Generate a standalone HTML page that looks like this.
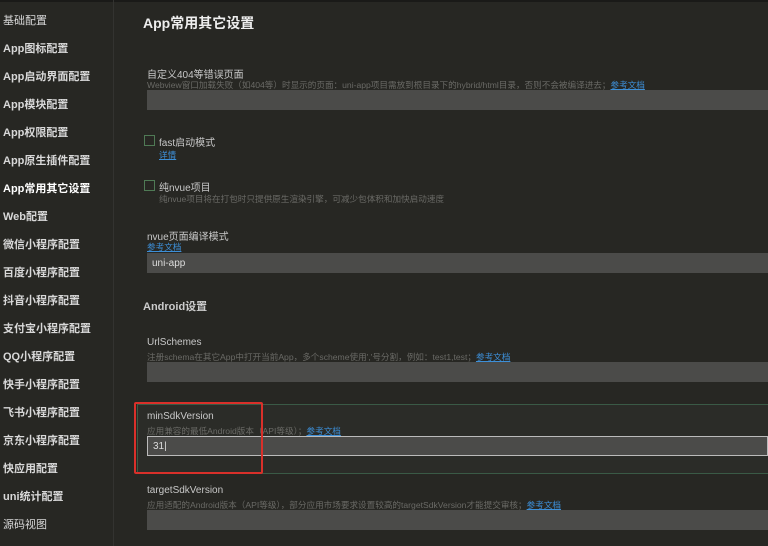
<!DOCTYPE html><html><head><meta charset="utf-8"><style>
body{margin:0;width:768px;height:546px;background:#272723;font-family:"Liberation Sans","Noto Sans CJK SC",sans-serif;overflow:hidden;position:relative;color:#ccc}
.a{position:absolute;white-space:nowrap}
.s{left:3px;font-size:11px;font-weight:bold;color:#d8d8d8}
.l{font-size:10px;color:#c8c8c8}
.d{font-size:8.6px;color:#6a6a66}
.k{color:#3d8fd8;text-decoration:underline}
.in{position:absolute;left:147px;right:0;height:20px;background:#4b4b49}
.cb{position:absolute;left:144px;width:9px;height:9px;border:1px solid #4f7a55}
</style></head><body>
<div class="a" style="left:0;top:0;width:768px;height:2px;background:#1a1a18"></div>
<div class="a" style="left:113px;top:0;width:1px;height:546px;background:#333330"></div>
<div class="a s" style="top:12px;font-weight:normal">基础配置</div>
<div class="a s" style="top:40px">App图标配置</div>
<div class="a s" style="top:68px">App启动界面配置</div>
<div class="a s" style="top:96px">App模块配置</div>
<div class="a s" style="top:124px">App权限配置</div>
<div class="a s" style="top:152px">App原生插件配置</div>
<div class="a s" style="top:180px;color:#fff">App常用其它设置</div>
<div class="a s" style="top:208px">Web配置</div>
<div class="a s" style="top:236px">微信小程序配置</div>
<div class="a s" style="top:264px">百度小程序配置</div>
<div class="a s" style="top:292px">抖音小程序配置</div>
<div class="a s" style="top:320px">支付宝小程序配置</div>
<div class="a s" style="top:348px">QQ小程序配置</div>
<div class="a s" style="top:376px">快手小程序配置</div>
<div class="a s" style="top:404px">飞书小程序配置</div>
<div class="a s" style="top:432px">京东小程序配置</div>
<div class="a s" style="top:460px">快应用配置</div>
<div class="a s" style="top:488px">uni统计配置</div>
<div class="a s" style="top:516px;font-weight:normal">源码视图</div>

<div class="a" style="left:143px;top:13px;font-size:14px;font-weight:bold;color:#eee">App常用其它设置</div>
<div class="a l" style="left:147px;top:66px">自定义404等错误页面</div>
<div class="a d" style="left:147px;top:79px">Webview窗口加载失败（如404等）时显示的页面：uni-app项目需放到根目录下的hybrid/html目录，否则不会被编译进去；<span class="k">参考文档</span></div>
<div class="in" style="top:90px"></div>

<div class="cb" style="top:135px"></div>
<div class="a l" style="left:159px;top:134px">fast启动模式</div>
<div class="a d k" style="left:159px;top:149px">详情</div>
<div class="cb" style="top:180px"></div>
<div class="a l" style="left:159px;top:179px">纯nvue项目</div>
<div class="a d" style="left:159px;top:193px">纯nvue项目将在打包时只提供原生渲染引擎，可减少包体积和加快启动速度</div>

<div class="a l" style="left:147px;top:228px">nvue页面编译模式</div>
<div class="a d k" style="left:147px;top:241px">参考文档</div>
<div class="in" style="top:253px"></div>
<div class="a l" style="left:152px;top:258px;color:#ddd">uni-app</div>

<div class="a" style="left:143px;top:298px;font-size:11px;font-weight:bold;color:#ccc">Android设置</div>
<div class="a l" style="left:147px;top:337px">UrlSchemes</div>
<div class="a d" style="left:147px;top:351px">注册schema在其它App中打开当前App，多个scheme使用','号分割，例如：test1,test；<span class="k">参考文档</span></div>
<div class="in" style="top:362px"></div>

<div class="a" style="left:137px;top:404px;width:640px;height:70px;border:1px solid #3a5a46;background:#2b2c28;box-sizing:border-box"></div>
<div class="a l" style="left:147px;top:411px">minSdkVersion</div>
<div class="a d" style="left:147px;top:425px">应用兼容的最低Android版本（API等级）；<span class="k">参考文档</span></div>
<div class="in" style="top:436px;border:1px solid #bbb;box-sizing:border-box"></div>
<div class="a l" style="left:153px;top:441px;color:#ddd">31|</div>
<div class="a" style="left:134px;top:402px;width:129px;height:72px;border:2px solid #d9302a;border-radius:2px;box-sizing:border-box"></div>

<div class="a l" style="left:147px;top:485px">targetSdkVersion</div>
<div class="a d" style="left:147px;top:499px">应用适配的Android版本（API等级），部分应用市场要求设置较高的targetSdkVersion才能提交审核；<span class="k">参考文档</span></div>
<div class="in" style="top:510px"></div>
</body></html>
